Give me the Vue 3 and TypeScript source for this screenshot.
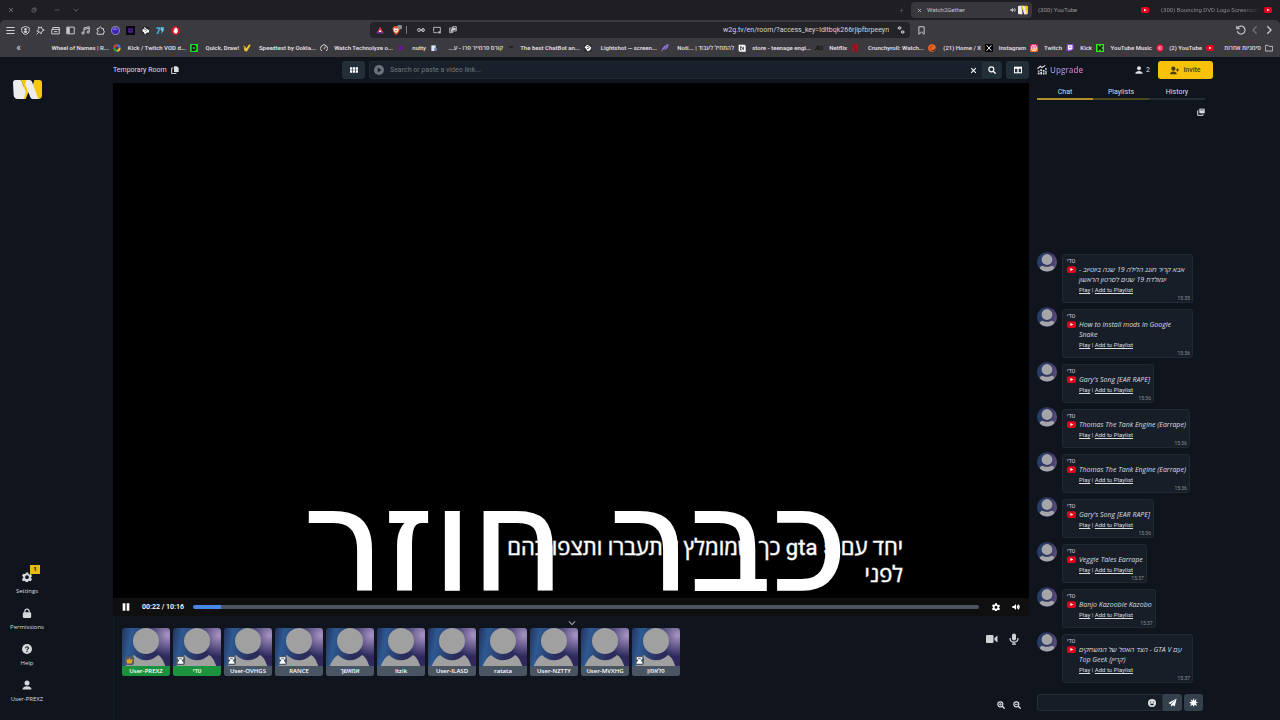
<script setup lang="ts">
import { h, type FunctionalComponent } from 'vue'

const glyphs: Record<string, string> = {
  close: '<path d="M4 4L20 20M20 4L4 20" fill="none" stroke="currentColor" stroke-width="3.500"/>',
  restore: '<path d="M8 8V4h12v12h-4M4 8h12v12H4z" fill="none" stroke="currentColor" stroke-width="2.5" stroke-linejoin="round"/>',
  minus: '<path d="M2 12h20" stroke="currentColor" stroke-width="2.5"/>',
  plus: '<path d="M2 12h20M12 2v20" stroke="currentColor" stroke-width="2.5"/>',
  down: '<path d="M3 7l9 10 9-10" fill="none" stroke="currentColor" stroke-width="3"/>',
  menu: '<path d="M1 4h22M1 12h22M1 20h22" stroke="currentColor" stroke-width="3"/>',
  shield: '<path d="M12 1l10 4v7c0 6-5 9-10 11C7 21 2 18 2 12V5z" fill="none" stroke="currentColor" stroke-width="2.5"/><circle cx="12" cy="9" r="3.5" fill="currentColor"/><path d="M6 16c2-4 10-4 12 0l-6 3z" fill="currentColor"/>',
  spark: '<path d="M14 2l2 6 6 3-6 3-3 7-4-6-7-2 5-4V2l4 3zM2 22l6-6" fill="none" stroke="currentColor" stroke-width="2.5" stroke-linejoin="round"/>',
  wallet: '<path d="M2 9h20v12H2zM5 9V4h17v8M8 15h9" fill="none" stroke="currentColor" stroke-width="2.6" stroke-linejoin="round"/>',
  sidebar: '<path d="M2 3h20v18H2z" fill="none" stroke="currentColor" stroke-width="2.5"/><path d="M3 4h7v16H3z" fill="currentColor"/>',
  music: '<path d="M8 18V5l14-3v13M8 9l14-3" fill="none" stroke="currentColor" stroke-width="2.5"/><circle cx="5" cy="19" r="3" fill="none" stroke="currentColor" stroke-width="2.5"/><circle cx="19" cy="16" r="3" fill="none" stroke="currentColor" stroke-width="2.5"/>',
  puzzle: '<path d="M3 7h5c-1-6 8-6 7 0h5v6c4 0 4 5 0 5v4H3v-5c4-1 4-5 0-6z" fill="none" stroke="currentColor" stroke-width="2.6" stroke-linejoin="round"/>',
  orb: '<circle cx="12" cy="12" r="12" fill="#8a84a8"/><circle cx="12" cy="12" r="9" fill="#3d22b8"/><path d="M5 9c4-5 10-3 14 2-6-3-9 2-14-2z" fill="#8f6cff"/>',
  dev: '<path d="M0 0h24v24H0z" fill="#0b0716"/><path d="M8 8h8v8H8z" fill="none" stroke="#6a2cc8" stroke-width="3"/>',
  diamond: '<circle cx="12" cy="12" r="11" fill="#1c1c20"/><path d="M9 2l6 5 7 4-1 6-6 1-4 5-3-6-5-4 2-6 4 1z" fill="#fff"/><path d="M9 10l3-2 3 4-3 3" stroke="#333" stroke-width="2" fill="none"/>',
  seven: '<path d="M1 3h12L6 21H1l6-13H1z" fill="#3fa9de"/><path d="M13 3h9l-3 6h4L13 21l3-9h-4z" fill="#69c3ee"/>',
  stop: '<path d="M7 1h10l6 6v10l-6 6H7l-6-6V7z" fill="#d3122a"/><path d="M7 9v7l3 4h5l3-5V8h-2v4-7h-2v6-7h-2v7-5H9v6z" fill="#fff"/>',
  bat: '<path d="M12 2l11 20H1z" fill="#b3237c"/><path d="M12 2l11 20-11-6z" fill="#e8432d"/><path d="M1 22h22l-11-6z" fill="#6a38a8"/><path d="M12 11l4 7H8z" fill="#fff"/>',
  lion: '<path d="M5 3h10l4 5-2 9-7 7-7-7L1 8z" fill="#f0562b"/><path d="M5 8l5 1 5-1 1 4-3 5-3 2-3-2-3-5z" fill="#fff"/><path d="M8 12l2 3 2-3" fill="none" stroke="#f0562b" stroke-width="2"/><rect x="13" y="0" width="11" height="10" rx="3" fill="#8b8a92"/>',
  glasses: '<circle cx="6" cy="12" r="4.5" fill="none" stroke="currentColor" stroke-width="2.5"/><circle cx="18" cy="12" r="4.5" fill="none" stroke="currentColor" stroke-width="2.5"/><path d="M6 12h12M18 6v12" stroke="currentColor" stroke-width="2"/>',
  cast: '<path d="M2 17V4h20v13M1 20h13" fill="none" stroke="currentColor" stroke-width="2.5"/><path d="M16 16h7v6h-7z" fill="currentColor"/>',
  translate: '<path d="M2 6h9v14H2zM11 2h11v13H11z" fill="none" stroke="currentColor" stroke-width="2.4"/><path d="M12 5h8v7h-8zM5 10h4v7H5z" fill="currentColor"/>',
  tune: '<path d="M11 6H2M13 18h9" stroke="currentColor" stroke-width="3"/><circle cx="8" cy="6" r="4" fill="none" stroke="currentColor" stroke-width="2.600"/><circle cx="17" cy="18" r="4" fill="none" stroke="currentColor" stroke-width="2.600"/>',
  bookmark: '<path d="M5 2h14v20l-7-6-7 6z" fill="none" stroke="currentColor" stroke-width="2.6" stroke-linejoin="round"/>',
  reload: '<path d="M4 7a9.500 9.500 0 11-1 8M2 2v7h7" fill="none" stroke="currentColor" stroke-width="2.6"/>',
  left: '<path d="M16 3l-9 9 9 9" fill="none" stroke="currentColor" stroke-width="2.6"/>',
  right: '<path d="M8 3l9 9-9 9" fill="none" stroke="currentColor" stroke-width="3"/>',
  wheel: '<path d="M12 1a11 11 0 0111 11h-6a5 5 0 00-5-5z" fill="#3e7be8"/><path d="M12 1A11 11 0 001 12h6a5 5 0 015-5z" fill="#e23b33"/><path d="M12 23A11 11 0 011 12h6a5 5 0 005 5z" fill="#2c9b4c"/><path d="M12 23a11 11 0 0011-11h-6a5 5 0 01-5 5z" fill="#f0b721"/>',
  vod: '<path d="M0 0h24v24H0z" fill="#24d629"/><path d="M5 3h7c10 0 10 18 0 18H5z" fill="#06240a"/><path d="M10 8h2c4 0 4 8 0 8h-2z" fill="#24d629"/>',
  draw: '<path d="M3 10l7 3L19 1l4 3-7 12-5 7-7-3z" fill="#f2c32d"/><path d="M1 6l8 5" stroke="#f2c32d" stroke-width="3"/>',
  gauge: '<path d="M5 21A10.500 10.500 0 1119 21" fill="none" stroke="#d5d6de" stroke-width="3"/><path d="M12 15l4-7" stroke="#d5d6de" stroke-width="3"/>',
  violet: '<path d="M5 1l17 11L5 23z" fill="#6b1796"/>',
  nutty: '<path d="M4 4h13v17H4z" fill="#dfe7f5"/><path d="M13 11l9 2-3 8h-6z" fill="#6d82b4"/>',
  dash: '<path d="M4 7h17l-4 4H8z" fill="#1c1b1f"/>',
  knot: '<path d="M1 1h22v22H1z" fill="#2a2a2e"/><path d="M9 2l7 3 6 6-4 8-7 3-4-6-5-6z" fill="#fff"/><path d="M8 8l4-1 4 3-4 5-3-3" stroke="#2b2b30" stroke-width="2" fill="none"/>',
  feather: '<path d="M1 23C3 12 10 3 23 1c0 9-6 16-15 16z" fill="#9476dc"/><path d="M1 23L18 6" stroke="#553b9a" stroke-width="2"/>',
  notion: '<path d="M2 2h18l3 3v18H5l-3-3z" fill="#fff"/><path d="M7 8h3l6 9V8M7 18h4M8 8v10" stroke="#222" stroke-width="2.4" fill="none"/>',
  ao: '<path d="M1 18l6-12h4v12M3 14h7" stroke="#1b1b1d" stroke-width="3" fill="none"/><circle cx="18" cy="12" r="5" fill="none" stroke="#1b1b1d" stroke-width="3"/>',
  netflix: '<path d="M5 1h5v22H5zM14 1h5v22h-5z" fill="#c40d16"/><path d="M5 1h5l9 22h-5z" fill="#a00c14"/>',
  crunchy: '<circle cx="12" cy="12" r="11.500" fill="#f06422"/><path d="M23 13a8 8 0 11-9-8 4 4 0 009 8z" fill="#3a241c"/><circle cx="14" cy="13" r="6" fill="#f06422"/>',
  x: '<path d="M0 0h24v24H0z" fill="#050505"/><path d="M5 4l14 16M19 4L5 20" stroke="#eee" stroke-width="3"/>',
  insta: '<rect width="24" height="24" rx="6" fill="#d6336f"/><path d="M0 16l24-6v8a6 6 0 01-6 6H6a6 6 0 01-6-6z" fill="#f07c32"/><rect x="5" y="5" width="14" height="14" rx="4" fill="none" stroke="#fff" stroke-width="2.5"/><circle cx="12" cy="12" r="3" fill="none" stroke="#fff" stroke-width="2.5"/>',
  twitch: '<path d="M2 1h20v13l-6 6h-5l-4 4v-4H2z" fill="#9147ff"/><path d="M6 4h13v9l-4 4H6z" fill="#fff"/><path d="M11 7v5M15 7v5" stroke="#9147ff" stroke-width="2"/>',
  kick: '<path d="M0 0h24v24H0z" fill="#35e21c"/><path d="M5 4h5v5h3V6h2V4h5v5h-3v6h3v5h-5v-2h-2v-3h-3v5H5z" fill="#07180a"/>',
  ytm: '<circle cx="12" cy="12" r="11" fill="#e4093a"/><circle cx="12" cy="12" r="6" fill="none" stroke="#fff" stroke-width="1.500"/><path d="M10 9l5 3-5 3z" fill="#fff"/>',
  yt: '<rect x="0" y="3" width="24" height="18" rx="5" fill="#e3001f"/><path d="M9 8l8 4-8 4z" fill="#fff"/>',
  folder: '<path d="M1 4h8l3 3h11v14H1z" fill="none" stroke="#d5d4da" stroke-width="2.5" stroke-linejoin="round"/>',
  speaker: '<path d="M1 9h5l6-6v18l-6-6H1z" fill="currentColor"/><path d="M15 8c2 2 2 6 0 8M18 5c4 4 4 10 0 14" fill="none" stroke="currentColor" stroke-width="3.500"/>',
  copy: '<path d="M9 1h9l5 5v12H9z" fill="currentColor"/><path d="M7 6H2v17h13v-3" fill="none" stroke="currentColor" stroke-width="3"/>',
  grid: '<path d="M0 4h7v7H0zM9 4h6v7H9zM17 4h7v7h-7zM0 13h7v7H0zM9 13h6v7H9zM17 13h7v7h-7z" fill="currentColor"/>',
  play: '<circle cx="12" cy="12" r="12" fill="currentColor"/><path d="M9 6l9 6-9 6z" fill="#18212a"/>',
  search: '<circle cx="10" cy="10" r="7.500" fill="none" stroke="currentColor" stroke-width="3.500"/><path d="M15 15l8 8" stroke="currentColor" stroke-width="4"/>',
  columns: '<path d="M0 2h24v20H0z" fill="currentColor"/><path d="M3 8h7v11H3zM14 8h7v11h-7z" fill="#26323c"/>',
  upgrade: '<path d="M1 9l7-6 4 3 8-5" fill="none" stroke="currentColor" stroke-width="2.5"/><path d="M2 13h4v3H2zM2 18h4v5H2zM8 10h4v5H8zM8 17h4v6H8zM14 12h4v4h-4zM14 18h4v5h-4zM20 7h3v5h-3zM20 14h3v9h-3z" fill="currentColor"/>',
  user: '<circle cx="12" cy="7" r="6" fill="currentColor"/><path d="M1 23c0-11 22-11 22 0z" fill="currentColor"/>',
  invite: '<circle cx="9" cy="7" r="5.500" fill="currentColor"/><path d="M0 22c0-10 18-10 18 0z" fill="currentColor"/><path d="M20 6v9M15.500 10.500h9" stroke="currentColor" stroke-width="2.5"/>',
  popout: '<path d="M7 2h16v14H7z" fill="currentColor"/><path d="M10 6h10" stroke="#10151d" stroke-width="2"/><path d="M4 8H2v14h16v-3" fill="none" stroke="currentColor" stroke-width="3"/>',
  gear: '<path fill-rule="evenodd" d="M9 1h6l1 4 2 1 4-1 2 5-3 3v1l3 3-3 5-4-1-2 1-1 3H9l-1-3-2-1-4 1-2-5 3-3v-2L0 9l3-5 4 1 2-1zM12 8a4.500 4.500 0 100 9 4.500 4.500 0 000-9z" fill="currentColor"/>',
  lock: '<path d="M7 11V7c0-6 10-6 10 0v4" fill="none" stroke="currentColor" stroke-width="3"/><rect x="2" y="10" width="20" height="14" rx="3" fill="currentColor"/>',
  help: '<circle cx="12" cy="12" r="12" fill="currentColor"/><path d="M8.500 10c0-5 7.500-4.500 7 0-.3 2.500-3.500 2-3.500 5" fill="none" stroke="#10151d" stroke-width="2.500"/><circle cx="12" cy="18" r="1.600" fill="#10151d"/>',
  pause: '<path d="M2 1h8v22H2zM14 1h8v22h-8z" fill="currentColor"/>',
  camera: '<rect x="0" y="4" width="15" height="16" rx="2" fill="currentColor"/><path d="M17 10l6-5v14l-6-5z" fill="currentColor"/>',
  mic: '<rect x="8" y="1" width="8" height="14" rx="4" fill="currentColor"/><path d="M4 10c0 11 16 11 16 0M12 18v5M8 22h8" fill="none" stroke="currentColor" stroke-width="2.5"/>',
  zoomin: '<circle cx="10" cy="10" r="7.500" fill="none" stroke="currentColor" stroke-width="3.500"/><path d="M15 15l8 8" stroke="currentColor" stroke-width="4"/><path d="M6 10h8M10 6v8" stroke="currentColor" stroke-width="2.5"/>',
  zoomout: '<circle cx="10" cy="10" r="7.500" fill="none" stroke="currentColor" stroke-width="3.500"/><path d="M15 15l8 8" stroke="currentColor" stroke-width="4"/><path d="M6 10h8" stroke="currentColor" stroke-width="3"/>',
  smile: '<circle cx="12" cy="12" r="12" fill="currentColor"/><path d="M6 14c2 6 10 6 12 0z" fill="#18202a"/><circle cx="8" cy="9" r="1.800" fill="#18202a"/><circle cx="16" cy="9" r="1.800" fill="#18202a"/>',
  send: '<path d="M23 1L1 13l6 3zM23 1L8 17v6l4-4 6 3z" fill="currentColor"/>',
  burst: '<path d="M12 0l2 7 6-5-2 7 6 3-6 2 4 7-7-3-3 6-2-6-7 4 3-7-6-3 7-2-3-7 6 4z" fill="currentColor"/>',
  crown: '<path d="M1 8l7 1 4-7 4 7 7-1-3 14H4z" fill="#e0a51d"/>',
  hourglass: '<path d="M2 1h20v4l-6 7 6 7v4H2v-4l6-7-6-7z" fill="currentColor"/><path d="M7 6h10" stroke="#4b5968" stroke-width="3"/>',
  avatar: '<circle cx="24" cy="13" r="13" fill="#a0a0a0"/><path d="M3 40c2-6 5-11 9-13 7 7 17 7 24 0 4 2 6 7 8 13z" fill="#a0a0a0"/>',
  face: '<circle cx="12" cy="9" r="6.500" fill="#a3a5a8"/><path d="M3 19c2-3 4-3 5-2 3 1 5 1 8 0 2-1 4 0 5 2-3 6-15 6-18 0z" fill="#a3a5a8"/>',
  logo: '<path d="M7 2h6l8 20h-6z" fill="#f4c60c"/><path d="M16 2h5a3 3 0 013 3v14a3 3 0 01-3 3h-2z" fill="#f4c60c"/><path d="M3 2h5l3 20H3a3 3 0 01-3-3V5a3 3 0 013-3zM11 2h5l5 20h-6z" fill="#ececec"/>',
}

const Icon: FunctionalComponent<{ name: string, box?: string }> = (props) =>
  h('svg', { viewBox: props.box ?? '0 0 24 24', class: 'icon', 'aria-hidden': 'true', innerHTML: glyphs[props.name] })
Icon.props = ['name', 'box']

const extensions = ['menu', 'shield', 'spark', 'wallet', 'sidebar', 'music', 'puzzle', 'orb', 'dev', 'diamond', 'seven', 'stop']

const bookmarks = [
  { text: 'Wheel of Names | R...', icon: 'wheel' },
  { text: 'Kick / Twitch VOD d...', icon: 'vod' },
  { text: 'Quick, Draw!', icon: 'draw' },
  { text: 'Speedtest by Ookla...', icon: 'gauge' },
  { text: 'Watch Technolyze o...', icon: 'violet' },
  { text: 'nutty', icon: 'nutty' },
  { text: 'קורס פרמייר פרו - ע...', icon: 'dash', rtl: true },
  { text: 'The best ChatBot an...', icon: 'knot' },
  { text: 'Lightshot — screen...', icon: 'feather' },
  { text: 'להתחיל לעבוד | Noti...\u200e', icon: 'notion', rtl: true },
  { text: 'store - teenage engi...', icon: 'ao' },
  { text: 'Netflix', icon: 'netflix' },
  { text: 'Crunchyroll: Watch...', icon: 'crunchy' },
  { text: '(21) Home / X', icon: 'x' },
  { text: 'Instagram', icon: 'insta' },
  { text: 'Twitch', icon: 'twitch' },
  { text: 'Kick', icon: 'kick' },
  { text: 'YouTube Music', icon: 'ytm' },
  { text: '(2) YouTube', icon: 'yt' },
  { text: 'סימניות אחרות', icon: 'folder', rtl: true },
]

const side = [
  { text: 'Settings', icon: 'gear', badge: 1 },
  { text: 'Permissions', icon: 'lock' },
  { text: 'Help', icon: 'help' },
  { text: 'User-PREXZ', icon: 'user' },
]

const members = [
  { name: 'User-PREXZ', mark: 'crown', active: true },
  { name: 'טדי', mark: 'hourglass', active: true },
  { name: 'User-OVHGS', mark: 'hourglass' },
  { name: 'RANCE', mark: 'hourglass' },
  { name: 'אמאשך' },
  { name: 'Itzik' },
  { name: 'User-ILASD' },
  { name: 'ratata' },
  { name: 'User-NZTTY' },
  { name: 'User-MVXHG' },
  { name: 'פלאפון', mark: 'hourglass' },
]

const messages = [
  { title: 'אבא קריר חוגג הלילה 19 שנה ביוטיוב - יומולדת 19 שנים לסרטון הראשון', time: '15:35' },
  { title: 'How to install mods in Google Snake', time: '15:36' },
  { title: 'Gary\'s Song [EAR RAPE]', time: '15:36' },
  { title: 'Thomas The Tank Engine (Earrape)', time: '15:36' },
  { title: 'Thomas The Tank Engine (Earrape)', time: '15:36' },
  { title: 'Gary\'s Song [EAR RAPE]', time: '15:36' },
  { title: 'Veggie Tales Earrape', time: '15:37' },
  { title: 'Banjo Kazoobie Kazobo', time: '15:37' },
  { title: 'הצד האפל של המשחקים - GTA V עם Top Geek (קריין)', time: '15:37' },
]
</script>

<template>
  <div class="window">
    <div class="strip">
      <div class="winctl">
        <button aria-label="Close"><Icon name="close" /></button>
        <button aria-label="Restore"><Icon name="restore" /></button>
        <button aria-label="Minimize"><Icon name="minus" /></button>
        <button aria-label="Search tabs"><Icon name="down" /></button>
      </div>
      <button class="newtab" aria-label="New tab"><Icon name="plus" /></button>
      <div class="tab current">
        <button aria-label="Close tab"><Icon name="close" /></button>
        <span class="tabname">Watch2Gether</span>
        <Icon name="speaker" class="sound" /><Icon name="logo" class="fav" />
      </div>
      <div class="tab"><span class="tabname">(300) YouTube</span><Icon name="yt" /></div>
      <div class="tab last"><span class="tabname fade">(300) Bouncing DVD Logo Screensav</span><Icon name="yt" /></div>
    </div>

    <div class="chrome">
      <div class="toolbar">
        <div class="exts">
          <button v-for="e in extensions" :key="e" :aria-label="e"><Icon :name="e" /></button>
        </div>
        <div class="address">
          <Icon name="bat" /><Icon name="lion" class="lion" /><i class="sep"></i>
          <Icon name="glasses" /><Icon name="cast" /><Icon name="translate" />
          <input aria-label="Address" value="w2g.tv/en/room/?access_key=ldltbqk266rjipfbrpeeyn">
          <Icon name="tune" />
        </div>
        <button class="save" aria-label="Bookmark"><Icon name="bookmark" /></button>
        <div class="nav">
          <button aria-label="Reload"><Icon name="reload" /></button>
          <button aria-label="Forward" disabled><Icon name="left" /></button>
          <button aria-label="Back"><Icon name="right" /></button>
        </div>
      </div>
      <div class="bookmarks">
        <button class="more" aria-label="More bookmarks">«</button>
        <a v-for="b in bookmarks" :key="b.text" href="#"><span :dir="b.rtl ? 'rtl' : 'ltr'">{{ b.text }}</span><Icon :name="b.icon" /></a>
      </div>
    </div>

    <div class="room">
      <nav class="rail">
        <a href="#" class="brand" aria-label="Home">
          <svg viewBox="0 0 87 57" aria-hidden="true">
            <path d="M64 0h15a8 8 0 018 8v38a11 11 0 01-11 11H66L56 28z" fill="#f6c70d" />
            <path d="M34 0h8l8 28-12 29H26z" fill="#f6c70d" />
            <path d="M8 0h12a6 6 0 016 4l12 32-4 17a6 6 0 01-6 4H14C6 57 3 52 2 46L0 8a8 8 0 018-8z" fill="#ececec" />
            <path d="M24 0h14L31 18z" fill="#f6c70d" />
            <path d="M40 0h10a8 8 0 017 5l19 52H60a8 8 0 01-8-5L36 12z" fill="#ececec" />
            <path d="M40 57l6-18 7 18z" fill="#10151d" />
          </svg>
        </a>
        <div class="sideitems">
          <button v-for="s in side" :key="s.text" class="sideitem">
            <Icon :name="s.icon" />
            <span>{{ s.text }}</span>
            <b v-if="s.badge" class="badge">{{ s.badge }}</b>
          </button>
        </div>
      </nav>

      <main class="stage">
        <header class="head">
          <button class="roomname">Temporary Room <Icon name="copy" /></button>
          <button class="square" aria-label="Apps"><Icon name="grid" /></button>
          <div class="find">
            <Icon name="play" class="playicon" />
            <input aria-label="Video link" placeholder="Search or paste a video link...">
            <button class="clear" aria-label="Clear"><Icon name="close" /></button>
            <button class="go" aria-label="Search"><Icon name="search" /></button>
          </div>
          <button class="square layout" aria-label="Layout"><Icon name="columns" /></button>
        </header>

        <section class="video">
          <p class="caption" dir="rtl"><span>יחד עם gta 5 כך שמומלץ שתעברו ותצפו בהם<br>לפני</span></p>
          <p class="headline" dir="rtl">כבר חוזר</p>
        </section>

        <div class="controls">
          <button aria-label="Pause"><Icon name="pause" /></button>
          <span class="clock">00:22 / 10:16</span>
          <input type="range" min="0" max="616" value="22" aria-label="Seek">
          <button aria-label="Player settings"><Icon name="gear" /></button>
          <button aria-label="Volume"><Icon name="speaker" /></button>
        </div>

        <section class="people">
          <button class="fold" aria-label="Collapse"><Icon name="down" /></button>
          <div class="row">
            <ul class="members">
              <li v-for="m in members" :key="m.name" :class="{ active: m.active }">
                <Icon name="avatar" box="0 0 48 38" class="portrait" />
                <i v-if="m.mark" class="mark"><Icon :name="m.mark" /></i>
                <span>{{ m.name }}</span>
              </li>
            </ul>
            <div class="devices">
              <button aria-label="Camera"><Icon name="camera" /></button>
              <button aria-label="Microphone"><Icon name="mic" /></button>
            </div>
          </div>
          <div class="zooms">
            <button aria-label="Zoom in"><Icon name="zoomin" /></button>
            <button aria-label="Zoom out"><Icon name="zoomout" /></button>
          </div>
        </section>
      </main>

      <aside class="panel">
        <div class="top">
          <a href="#" class="upgrade"><Icon name="upgrade" /><span>Upgrade</span></a>
          <span class="count"><Icon name="user" />2</span>
          <button class="invite"><Icon name="invite" />Invite</button>
        </div>
        <div class="tabs">
          <button class="on">Chat</button>
          <button class="semi">Playlists</button>
          <button>History</button>
        </div>
        <button class="popout" aria-label="Pop out"><Icon name="popout" /></button>
        <div class="chat">
          <article v-for="(m, i) in messages" :key="i">
            <span class="face"><Icon name="face" /></span>
            <div class="bubble">
              <div class="who">טדי</div>
              <div class="entry">
                <Icon name="yt" />
                <div>
                  <em>{{ m.title }}</em>
                  <div class="links"><a href="#">Play</a> | <a href="#">Add to Playlist</a></div>
                </div>
              </div>
              <time>{{ m.time }}</time>
            </div>
          </article>
        </div>
        <form class="compose" @submit.prevent>
          <div class="field">
            <input aria-label="Message">
            <button type="button" aria-label="Emoji"><Icon name="smile" /></button>
          </div>
          <button class="send" aria-label="Send"><Icon name="send" /></button>
          <button type="button" class="effect" aria-label="Effects"><Icon name="burst" /></button>
        </form>
      </aside>
    </div>
  </div>
</template>

<style>
body { background: #10151d; }
</style>

<style scoped>
* { box-sizing: border-box; }
.window { min-height: 100vh; display: flex; flex-direction: column; background: #1f1e23; color: #dcdde0; font: 7px/10px Roboto, "Open Sans", sans-serif; overflow: hidden; }
button, input { font: inherit; color: inherit; background: none; border: 0; padding: 0; margin: 0; min-width: 0; outline: 0; }
button { display: flex; align-items: center; justify-content: center; }
a { color: inherit; text-decoration: none; }
p, ul { margin: 0; padding: 0; list-style: none; }
.icon { width: 8px; height: 8px; flex: none; display: block; }

.strip { height: 20px; display: flex; align-items: center; font-size: 6px; color: #98979c; }
.winctl { display: flex; flex: 1; gap: 17px; padding-left: 8px; color: #77767b; }
.winctl .icon { width: 6px; height: 6px; }
.winctl button:last-child { margin-left: -4px; }
.newtab { width: 20px; color: #5f5e63; }
.newtab .icon { width: 5px; height: 5px; }
.tab { width: 121px; height: 16px; display: flex; align-items: center; gap: 4px; padding: 0 4px 0 6px; }
.tab.current { background: #38373c; border-radius: 4px; color: #c5c4c9; gap: 5px; }
.tab.current button .icon { width: 5px; height: 5px; }
.tab .icon { width: 8px; height: 8px; }
.tab .sound { width: 6px; height: 6px; margin-right: -3px; }
.tab .fav { width: 10px; height: 10px; }
.tab.last { width: 127px; padding-left: 8px; padding-right: 8px; }
.tabname { flex: 1; white-space: nowrap; }
.fade { color: #8b8a8f; mask-image: linear-gradient(90deg, #000 80%, transparent); }

.chrome { background: #3b3a3f; border-radius: 5px 5px 0 0; height: 37px; }
.toolbar { height: 20px; display: flex; align-items: center; padding: 0 6px 0 5px; color: #d0cfd5; }
.exts { width: 365px; display: flex; }
.exts button { width: 10px; margin-right: 5px; }
.exts .icon { width: 9px; height: 9px; }
.address { flex: 1; height: 16px; margin-right: 6px; border-radius: 4px; background: #242328; display: flex; align-items: center; gap: 8px; padding: 0 5px 0 6px; }
.address .icon { width: 8px; height: 8px; }
.address .lion { width: 10px; height: 10px; }
.sep { width: 1px; height: 8px; background: #77767b; margin: 0 2px 0 -4px; }
.address input { flex: 1; text-align: right; height: 12px; color: #d4d3d9; }
.save { width: 10px; }
.save .icon { width: 9px; height: 9px; }
.nav { width: 348px; display: flex; justify-content: flex-end; gap: 4px; }
.nav .icon { width: 10px; height: 10px; }
.nav button:disabled { opacity: .4; }
.bookmarks { height: 15px; display: grid; grid-template-columns: 37fr 84fr 77fr 53fr 77fr 77fr 33fr 77fr 77fr 77fr 77fr 77fr 36fr 77fr 57fr 45fr 36fr 30fr 60fr 50fr 59fr; align-items: center; font-size: 6px; font-weight: 600; color: #e0dfe4; padding-right: 7px; }
.bookmarks a { display: flex; align-items: center; justify-content: flex-end; gap: 4px; white-space: nowrap; min-width: 0; }
.bookmarks .icon { width: 8px; height: 8px; }
.more { font-size: 10px; font-weight: 400; }

.room { flex: 1; display: grid; grid-template-columns: 113px minmax(0, 1fr) 251px; background: #10151d; }
.rail { display: flex; flex-direction: column; justify-content: space-between; padding: 23px 0 10px; width: 54px; }
.brand { width: 29px; margin-left: 13px; }
.brand svg { display: block; }
.sideitem { position: relative; width: 54px; height: 36px; flex-direction: column; gap: 4px; font: 6px/10px "Open Sans", sans-serif; }
.sideitem .icon { width: 10px; height: 10px; color: #d5d7da; }
.badge { position: absolute; left: 30px; top: -1px; width: 10px; height: 9px; background: #e9b90f; color: #222; font-size: 6px; line-height: 9px; text-align: center; }

.stage { display: flex; flex-direction: column; }
.head { height: 26px; display: flex; align-items: center; }
.roomname { width: 229px; justify-content: flex-start; gap: 4px; }
.square { width: 23px; height: 18px; border-radius: 3px; background: #222e38; color: #fff; }
.square .icon { width: 8px; height: 8px; }
.find { flex: 1; height: 18px; margin: 0 4px; display: flex; align-items: center; background: #18212b; border: 1px solid #1f2932; border-radius: 3px; overflow: hidden; }
.playicon { width: 10px; height: 10px; margin: 0 6px 0 4px; color: #6c7279; }
.find input { flex: 1; height: 16px; }
.find input::placeholder { color: #6f767e; opacity: 1; }
.clear { width: 18px; height: 16px; color: #fff; }
.clear .icon { width: 7px; height: 7px; }
.go { width: 19px; height: 16px; background: #222e38; color: #fff; }

.video { flex: 1; background: #000; position: relative; }
.caption { position: absolute; right: 126px; bottom: 10px; color: #fff; font: 22px/27px Roboto, "Open Sans", sans-serif; -webkit-text-stroke: 1px #fff8; white-space: nowrap; }
.headline { position: absolute; right: 182px; bottom: -23px; color: #fff; font: 142px/160px "DejaVu Sans", "Open Sans", sans-serif; -webkit-text-stroke: 2px #fff; white-space: nowrap; }
.controls { height: 18px; background: #0f0f10; display: flex; align-items: center; padding: 0 9px; color: #fff; }
.controls .icon { width: 8px; height: 8px; }
.clock { width: 51px; margin-left: 12px; font-weight: 600; }
.controls input { flex: 1; appearance: none; height: 4px; border-radius: 2px; background: linear-gradient(90deg, #4a86e6 3.6%, #4c545e 3.6%); margin-right: 13px; }
.controls input::-webkit-slider-thumb { appearance: none; width: 0; height: 4px; }
.controls input ~ button + button { margin-left: 12px; }

.people { height: 104px; display: flex; flex-direction: column; justify-content: space-between; padding: 3px 8px 11px; border-left: 1px solid #171d25; }
.fold { align-self: center; }
.row { display: flex; justify-content: space-between; flex: 1; padding-top: 1px; }
.members { display: flex; gap: 3px; }
.members li { position: relative; width: 48px; height: 48px; border-radius: 3px; overflow: hidden; background: radial-gradient(circle at 95% 15%, #a894c4, transparent 35%), linear-gradient(100deg, #26315c, #2d5a92 18%, #2a2d5c 55%, #30285c); }
.portrait { width: 48px; height: 38px; }
.members span { position: absolute; left: 0; right: 0; bottom: 0; height: 10px; background: #4a5563; color: #fff; text-align: center; font: 600 6px/10px "Open Sans", sans-serif; white-space: nowrap; }
.members .active span { background: #1b923c; }
.mark { position: absolute; left: 3px; bottom: 11px; width: 9px; height: 9px; border-radius: 2px; background: #4b5968; color: #fff; display: flex; align-items: center; justify-content: center; }
.mark .icon { width: 7px; height: 7px; }
.devices { display: flex; align-items: flex-start; gap: 10px; padding: 5px 1px 0 0; color: #d0d2d5; }
.devices .icon { width: 12px; height: 12px; }
.zooms { display: flex; justify-content: flex-end; gap: 8px; }

.panel { display: flex; flex-direction: column; padding: 0 67px 9px 8px; }
.top { height: 26px; display: flex; align-items: center; }
.upgrade { flex: 1; display: flex; align-items: center; gap: 3px; font: 600 8px/10px "Open Sans", sans-serif; }
.upgrade .icon { width: 10px; height: 10px; }
.upgrade span { background: linear-gradient(90deg, #7a9be8, #e46bb0); background-clip: text; color: transparent; }
.count { display: flex; align-items: center; gap: 3px; margin-right: 8px; }
.invite { width: 55px; height: 18px; border-radius: 3px; background: #f9c20a; color: #4a3d10; gap: 4px; font-weight: 500; }
.invite .icon { width: 9px; height: 9px; }
.tabs { display: grid; grid-template-columns: repeat(3, 1fr); height: 17px; margin-right: 8px; }
.tabs button { border-bottom: 2px solid #242c34; padding-top: 2px; }
.tabs .on { border-color: #b08f2b; }
.tabs .semi { border-color: #4c491f; }
.popout { align-self: flex-end; margin: 8px 8px 0 0; }
.chat { flex: 1; display: flex; flex-direction: column; justify-content: flex-end; gap: 6px; padding-bottom: 11px; }
article { display: flex; align-items: flex-start; gap: 5px; }
.face { width: 20px; height: 20px; margin-top: -2px; border-radius: 50%; overflow: hidden; background: linear-gradient(100deg, #22406c, #353360 60%, #6a5788); }
.face .icon { width: 20px; height: 20px; }
.bubble { position: relative; max-width: 131px; padding: 2px 3px 7px 4px; background: #171e27; border: 1px solid #212a33; border-radius: 3px; }
.who { font-size: 6px; height: 8px; line-height: 8px; text-align: left; }
.entry { display: flex; gap: 3px; }
.entry .icon { width: 9px; height: 9px; }
.entry em { display: block; font-family: "Open Sans", sans-serif; font-weight: 500; }
.links { font-size: 6px; }
.links a { text-decoration: underline; }
time { position: absolute; right: 2px; bottom: 0; font-size: 5px; line-height: 7px; color: #8c9299; }
.compose { display: flex; height: 17px; margin-right: 10px; }
.field { flex: 1; display: flex; align-items: center; background: #161d26; border: 1px solid #27303a; border-radius: 3px 0 0 3px; padding-right: 6px; }
.field input { flex: 1; height: 15px; }
.send, .effect { width: 19px; background: #35404d; color: #fff; border-radius: 0 3px 3px 0; }
.effect { border-radius: 3px; margin-left: 2px; }
.send .icon, .effect .icon { width: 9px; height: 9px; }
</style>
